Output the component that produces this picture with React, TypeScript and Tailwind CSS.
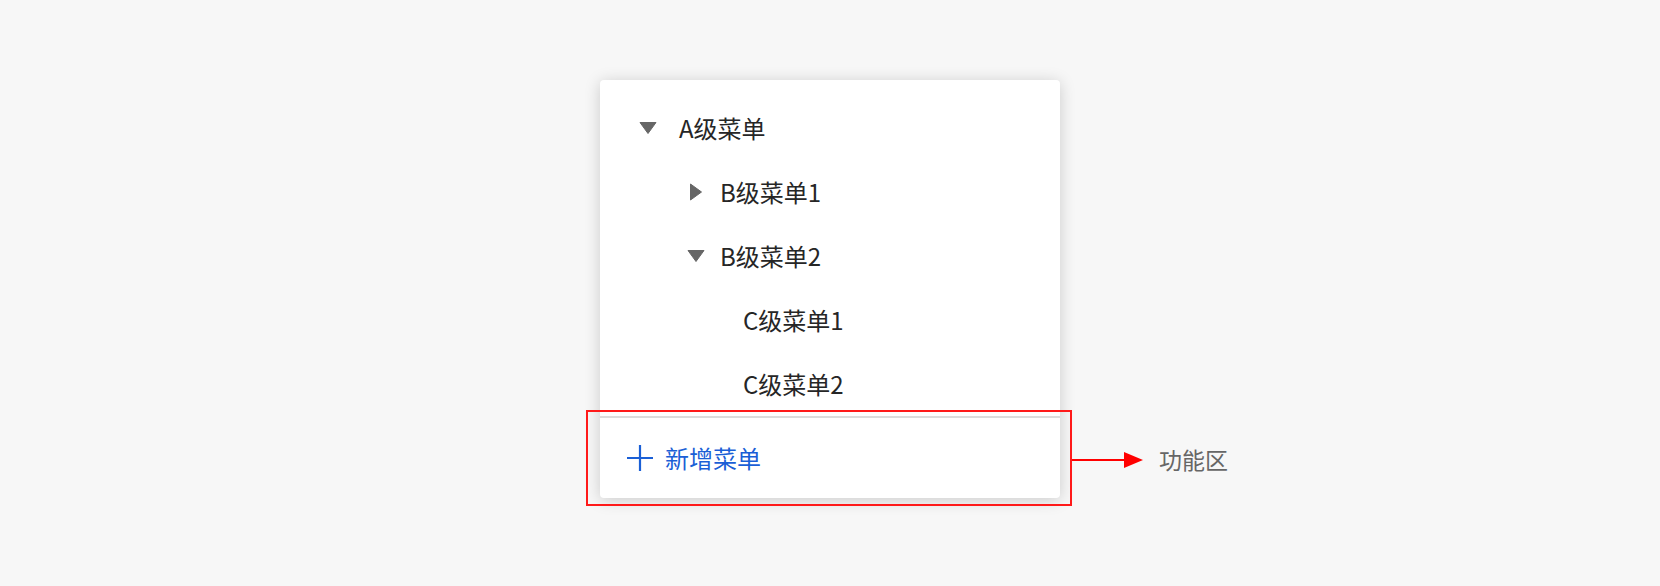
import React from 'react';

const font = { fontFamily: '"Noto Sans CJK SC", "Noto Sans", sans-serif' };

type Node = { label: string; level: 0 | 1 | 2; icon: 'down' | 'right' | null };

const nodes: Node[] = [
  { label: 'A级菜单', level: 0, icon: 'down' },
  { label: 'B级菜单1', level: 1, icon: 'right' },
  { label: 'B级菜单2', level: 1, icon: 'down' },
  { label: 'C级菜单1', level: 2, icon: null },
  { label: 'C级菜单2', level: 2, icon: null },
];

const Caret = ({ dir }: { dir: 'down' | 'right' }) => (
  <svg width="24" height="24" viewBox="0 0 24 24" className="shrink-0">
    {dir === 'down' ? (
      <path d="M4 6.5 H20 L12 17.5 Z" fill="#666666" strokeLinejoin="round" stroke="#666666" strokeWidth="1" />
    ) : (
      <path d="M6.5 4 V20 L17.5 12 Z" fill="#666666" strokeLinejoin="round" stroke="#666666" strokeWidth="1" />
    )}
  </svg>
);

const TreeRow = ({ node }: { node: Node }) => {
  if (node.level === 0) {
    return (
      <div className="flex h-16 items-center pl-[36px] gap-[19px]">
        {node.icon && <Caret dir={node.icon} />}
        <span className="text-[24px] text-[#262626] leading-none">{node.label}</span>
      </div>
    );
  }
  if (node.level === 1) {
    return (
      <div className="flex h-16 items-center pl-[84px] gap-[12px]">
        {node.icon && <Caret dir={node.icon} />}
        <span className="text-[24px] text-[#262626] leading-none">{node.label}</span>
      </div>
    );
  }
  return (
    <div className="flex h-16 items-center pl-[143px]">
      <span className="text-[24px] text-[#262626] leading-none">{node.label}</span>
    </div>
  );
};

export default function App() {
  return (
    <div className="w-[1660px] h-[586px] bg-[#f7f7f7] pt-[80px]" style={font}>
      <div className="ml-[600px] w-[460px] bg-white rounded-[4px] shadow-[0_2px_16px_rgba(0,0,0,0.18)]">
        <div className="pt-[16px]">
          {nodes.map((n, i) => (
            <TreeRow key={i} node={n} />
          ))}
        </div>
        <div className="relative border-t-2 border-[#dcdcdc] h-[82px] flex items-center pl-[27px] gap-[12px]">
          <svg width="26" height="26" viewBox="0 0 26 26" className="shrink-0">
            <path d="M13 0 V26 M0 13 H26" stroke="#1a5fd6" strokeWidth="2.2" />
          </svg>
          <span className="text-[24px] text-[#1a5fd6] leading-none">新增菜单</span>

          {/* annotation */}
          <div className="absolute -left-[14px] -right-[12px] -top-[8px] -bottom-[8px] border-2 border-[#ff1a1a]" />
          <div className="absolute left-[calc(100%+12px)] top-[30px] flex items-center">
            <div className="w-[52px] h-[2px] bg-[#ff0000]" />
            <svg width="19" height="16" viewBox="0 0 19 16" className="shrink-0">
              <path d="M0 0 L19 8 L0 16 Z" fill="#ff0000" />
            </svg>
            <span className="ml-[16px] text-[23px] text-[#666666] leading-none whitespace-nowrap">功能区</span>
          </div>
        </div>
      </div>
    </div>
  );
}
